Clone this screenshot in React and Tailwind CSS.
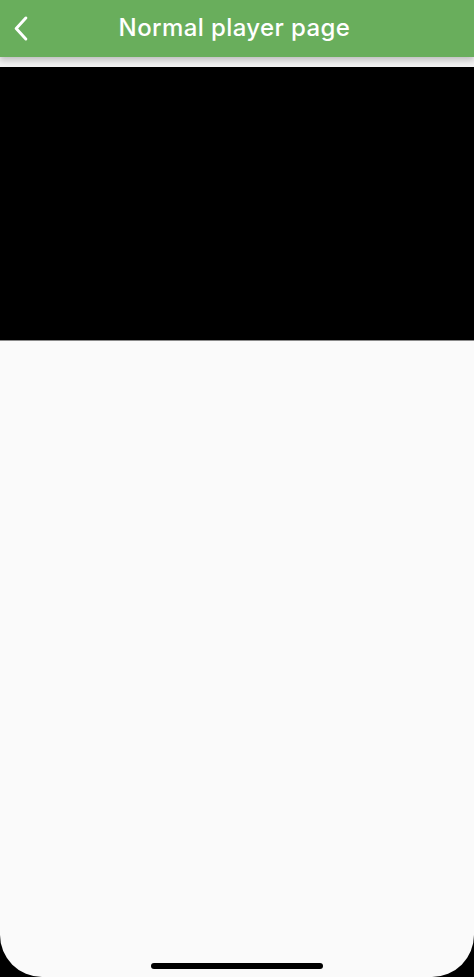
import React from 'react';

function App() {
  return (
    <div className="relative h-[977px] w-full bg-black overflow-hidden" style={{ fontFamily: 'Inter, "Liberation Sans", sans-serif' }}>
      <div className="flex h-full flex-col bg-[#fafafa] rounded-b-[42px]">
        {/* App bar */}
        <header className="relative z-10 flex h-[57px] items-center bg-[#69ae5c] shadow-[0_3px_6px_rgba(0,0,0,0.22)]">
          <button className="flex h-full w-[40px] items-center justify-center pl-[2px]">
            <svg viewBox="0 0 16 26" className="h-[25px] w-[16px]" fill="none" stroke="white" strokeWidth="3" strokeLinecap="round" strokeLinejoin="round">
              <path d="M13 2 L3 13 L13 24" />
            </svg>
          </button>
          <h1 className="flex-1 pr-[45px] pb-[2px] text-center text-[24px] font-medium text-white tracking-[0.4px]">
            Normal player page
          </h1>
        </header>

        <div className="h-[10px] bg-[#f2f2f2]" />

        {/* Video area */}
        <div className="h-[273px] bg-black" />
        <div className="h-[1px] bg-[#8a8a8a]" />

        <div className="flex flex-1 flex-col justify-end items-center pb-[8px]">
          <div className="h-[6px] w-[172px] rounded-full bg-black" />
        </div>
      </div>
    </div>
  );
}

export default App;
